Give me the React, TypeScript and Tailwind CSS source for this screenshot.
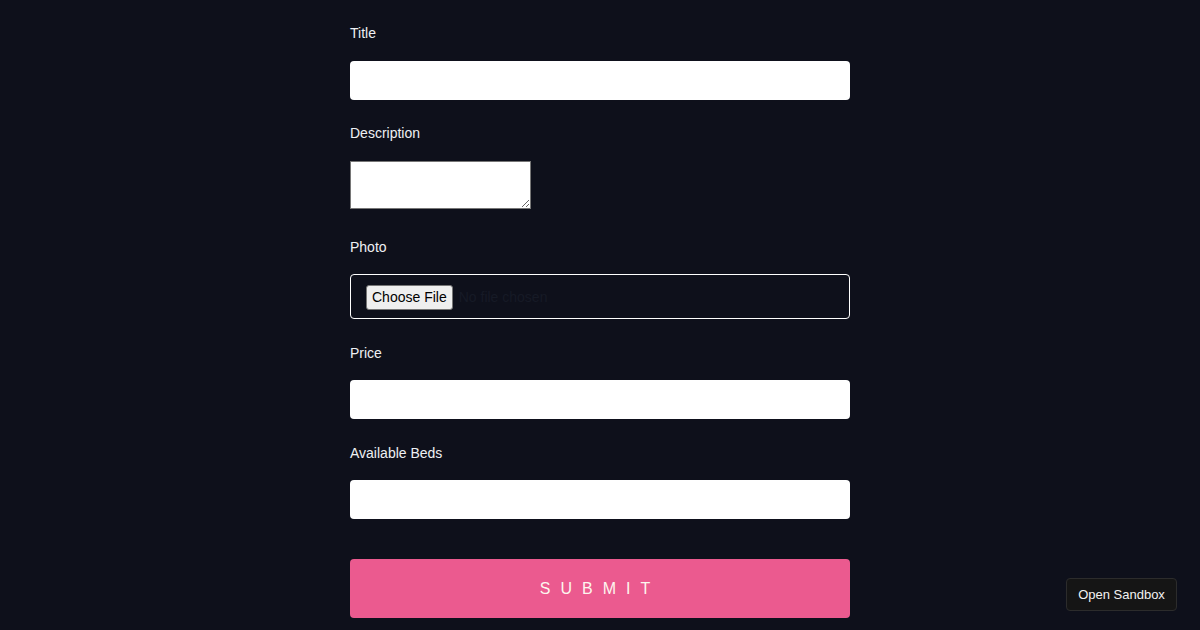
import React from "react";

const labelCls = "block text-[14px] leading-[20px] text-[#eef0f4]";
const inputCls = "block w-full h-[39px] rounded-[4px] bg-white text-black px-3 outline-none";

function Field({ label, children, gap }: { label: string; children: React.ReactNode; gap: string }) {
  return (
    <div className={gap}>
      <label className={labelCls}>{label}</label>
      {children}
    </div>
  );
}

export default function App() {
  return (
    <div
      className="min-h-screen w-full bg-[#0e101b]"
      style={{ fontFamily: '"Liberation Sans", Arial, sans-serif' }}
    >
      <form className="mx-auto w-[500px] pt-[23px]" onSubmit={(e) => e.preventDefault()}>
        <Field label="Title" gap="mb-[23px]">
          <input type="text" className={`${inputCls} mt-[18px]`} />
        </Field>
        <Field label="Description" gap="mb-[28px]">
          <textarea className="mt-[18px] block w-[181px] h-[48px] border border-[#767676] bg-white text-black text-[13px]" />
        </Field>
        <Field label="Photo" gap="mb-[24px]">
          <input
            type="file"
            className="mt-[17px] block w-full h-[45px] rounded-[4px] border border-white px-[15px] py-[10px] text-[14px] text-[#161a26] file:mr-[6px] file:px-[5px] file:py-[1px] file:text-[14px] file:text-black file:bg-[#efefef] file:border file:border-[#767676] file:rounded-[3px]"
          />
        </Field>
        <Field label="Price" gap="mb-[24px]">
          <input type="number" className={`${inputCls} mt-[17px]`} />
        </Field>
        <Field label="Available Beds" gap="mb-[40px]">
          <input type="number" className={`${inputCls} mt-[17px]`} />
        </Field>
        <button
          type="submit"
          className="block w-full h-[59px] rounded-[4px] bg-[#eb5a8f] text-[16px] tracking-[10px] text-[#fdf6ee]"
        >
          SUBMIT
        </button>
      </form>
      <button className="fixed right-[23px] bottom-[19px] h-[33px] w-[111px] rounded-[4px] border border-[#2c2c2c] bg-[#151515] text-[13px] text-[#f2f2f2]">
        Open Sandbox
      </button>
    </div>
  );
}
